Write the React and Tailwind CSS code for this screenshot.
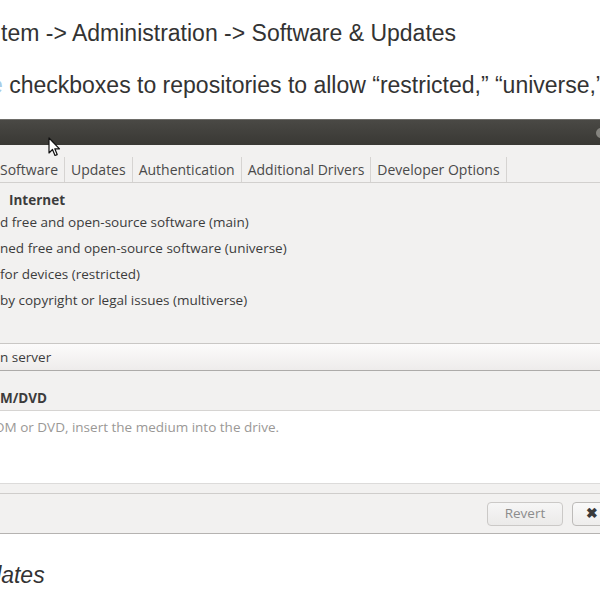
export default function App() {
  const repos = [
    'd free and open-source software (main)',
    'ned free and open-source software (universe)',
    'for devices (restricted)',
    'by copyright or legal issues (multiverse)',
  ];
  const tabs = ['Software', 'Updates', 'Authentication', 'Additional Drivers', 'Developer Options'];

  return (
    <div className="w-[600px] h-[600px] overflow-hidden bg-white relative">
      {/* Article text above the screenshot */}
      <div className="font-['Liberation_Sans',Arial,sans-serif] text-[23px] leading-[28px] text-[#333] whitespace-nowrap">
        <div className="pt-[19px] pl-[1px]">tem -&gt; Administration -&gt; Software &amp; Updates</div>
        <div className="mt-[24px]">
          <span className="-ml-[10px] text-[#a9cbe6]">e</span> checkboxes to repositories to allow “restricted,” “universe,”
        </div>
      </div>

      {/* Software & Updates window */}
      <div className="mt-[20px] font-['Open_Sans',sans-serif] text-[13.5px] text-[#3c3c3c] overflow-hidden">
        {/* Title bar */}
        <div className="h-[26px] border-t border-[#6e6d69] bg-gradient-to-b from-[#4a4945] to-[#393834] flex items-center justify-end">
          <div className="w-[10px] h-[10px] rounded-full bg-[#85847f] -mr-[6px]" />
        </div>

        <div className="bg-[#f2f1f0] pt-[12px]">
          {/* Tabs */}
          <div className="h-[26px] flex border-b border-[#d2d0ce] text-[14px]">
            {tabs.map((t, i) => (
              <div
                key={t}
                className={`px-[6px] flex items-center border-r border-[#d6d4d2] whitespace-nowrap text-[#4a4a4a] ${i === 0 ? '-ml-[6px]' : ''}`}
              >
                {t}
              </div>
            ))}
          </div>

          {/* Downloadable from the Internet */}
          <div className="mt-[7px] pl-[9px] leading-[20px] font-bold">Internet</div>
          <div className="mt-[2px] flex flex-col gap-[6px] leading-[20px] whitespace-nowrap">
            {repos.map((r) => (
              <div key={r}>{r}</div>
            ))}
          </div>

          {/* Download from combo */}
          <div className="mt-[33px] border-t border-[#c9c7c5] border-b border-b-[#adaba9] h-[28px] bg-gradient-to-b from-[#fcfbfb] to-[#eeeceb] flex items-center">
            n server
          </div>

          {/* CD-ROM section */}
          <div className="pt-[17px] pb-[2px] leading-[20px] font-bold border-b border-[#d6d4d2]">M/DVD</div>
          <div className="bg-white h-[72px] pt-[6px] leading-[20px] text-[#9a9896] whitespace-nowrap">
            <span className="-ml-[6px]">OM or DVD, insert the medium into the drive.</span>
          </div>
          <div className="border-t border-[#dcdbda] h-[11px] border-b border-b-[#cfcdcb]" />

          {/* Bottom buttons */}
          <div className="h-[40px] flex items-center justify-end border-b border-[#b5b3b1]">
            <div className="w-[76px] h-[24px] mr-[9px] rounded-[4px] border border-[#cbc9c7] bg-gradient-to-b from-[#f6f6f6] to-[#ebeae9] flex items-center justify-center text-[#8c8c8c]">
              Revert
            </div>
            <div className="w-[60px] h-[24px] -mr-[32px] rounded-[4px] border border-[#bdbbb9] bg-gradient-to-b from-[#fafafa] to-[#eeedec] flex items-center pl-[13px] text-[#3a3a3a] font-bold">
              ✖
            </div>
          </div>
        </div>
      </div>

      <div className="mt-[27px] font-['Liberation_Sans',Arial,sans-serif] italic text-[23px] leading-[28px] text-[#333] whitespace-nowrap">
        <span className="-ml-[41px] inline-block">Updates</span>
      </div>

      {/* Mouse pointer */}
      <svg className="absolute left-[48px] top-[137px]" width="13" height="20" viewBox="0 0 13 20">
        <path d="M1 1 L1 16 L4.5 12.5 L7 18.5 L9.2 17.6 L6.8 11.8 L11.5 11.8 Z" fill="#fff" stroke="#111" strokeWidth="1.2" strokeLinejoin="round" />
      </svg>
    </div>
  );
}
